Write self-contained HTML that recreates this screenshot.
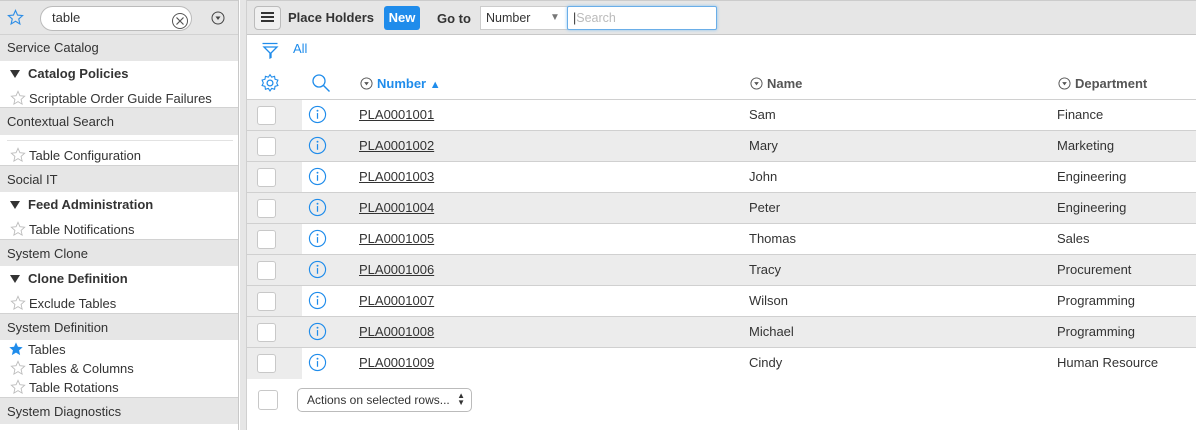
<!DOCTYPE html>
<html><head><meta charset="utf-8"><style>
*{margin:0;padding:0;box-sizing:border-box}
body{width:1196px;height:430px;overflow:hidden;background:#fff;font-family:"Liberation Sans",Arial,sans-serif;font-size:13px;color:#333;position:relative}
.a{position:absolute}
.nav{left:0;top:0;width:239px;height:430px;background:#fff;border-right:1px solid #c8c8c8}
.band{position:absolute;left:0;width:238px;background:#e6e6e6;color:#333;font-size:13px;padding-left:7px;border-top:1px solid #d2d2d2}
.it{position:absolute;left:10px;font-size:13px;color:#333;white-space:nowrap}
.it svg{vertical-align:-3px;margin-right:3px}
.grp{position:absolute;left:10px;font-weight:bold;font-size:13px;color:#333}
.grp:before{content:"";display:inline-block;border-left:5px solid transparent;border-right:5px solid transparent;border-top:8px solid #333;margin-right:8px;vertical-align:0px}
.row{position:absolute;left:247px;width:949px;height:31px;border-top:1px solid #d0d0d0}
.cb{position:absolute;left:10px;top:6px;width:19px;height:19px;border:1px solid #c8c8c8;border-radius:3px;background:#fff}
.info{position:absolute;left:61px;top:5px}
.num{position:absolute;left:112px;top:7px;text-decoration:underline;color:#333}
.nm{position:absolute;left:502px;top:7px}
.dp{position:absolute;left:810px;top:7px}
</style></head><body>
<div class="a nav">
 <div class="a" style="left:0;top:0;width:238px;height:35px;background:#e6e6e6;border-top:1px solid #ccc"></div>
 <svg class="a" style="left:7px;top:9px" width="17" height="17" viewBox="0 0 24 24"><path d="M12 2l2.9 6.6 7.1.7-5.4 4.8 1.6 7-6.2-3.7-6.2 3.7 1.6-7L2 9.3l7.1-.7z" fill="none" stroke="#2e8ee6" stroke-width="1.6"/></svg>
 <div class="a" style="left:40px;top:6px;width:152px;height:25px;border:1px solid #bbb;border-radius:13px;background:#fff;padding:3px 0 0 11px;font-size:13px">table</div>
 <svg class="a" style="left:171px;top:12px" width="18" height="18" viewBox="0 0 18 18"><circle cx="9" cy="9" r="7.5" fill="#fff" stroke="#555"/><path d="M5.5 5.5l7 7M12.5 5.5l-7 7" stroke="#555" stroke-width="1.2"/></svg>
 <svg class="a" style="left:211px;top:11px" width="14" height="14" viewBox="0 0 14 14"><circle cx="7" cy="7" r="6" fill="none" stroke="#444"/><path d="M4.5 5.5h5L7 9z" fill="#444"/></svg>
 <div class="band" style="top:34px;height:27px;padding-top:5px">Service Catalog</div>
 <div class="grp" style="top:66px">Catalog Policies</div>
 <div class="it" style="top:90px"><svg width="16" height="16" viewBox="0 0 24 24"><path d="M12 2l2.9 6.6 7.1.7-5.4 4.8 1.6 7-6.2-3.7-6.2 3.7 1.6-7L2 9.3l7.1-.7z" fill="none" stroke="#bbb" stroke-width="1.3"/></svg>Scriptable Order Guide Failures</div>
 <div class="band" style="top:107px;height:28px;padding-top:6px">Contextual Search</div>
 <div class="a" style="left:7px;top:140px;width:226px;height:1px;background:#e2e2e2"></div>
 <div class="it" style="top:147px"><svg width="16" height="16" viewBox="0 0 24 24"><path d="M12 2l2.9 6.6 7.1.7-5.4 4.8 1.6 7-6.2-3.7-6.2 3.7 1.6-7L2 9.3l7.1-.7z" fill="none" stroke="#bbb" stroke-width="1.3"/></svg>Table Configuration</div>
 <div class="band" style="top:165px;height:27px;padding-top:6px">Social IT</div>
 <div class="grp" style="top:197px">Feed Administration</div>
 <div class="it" style="top:221px"><svg width="16" height="16" viewBox="0 0 24 24"><path d="M12 2l2.9 6.6 7.1.7-5.4 4.8 1.6 7-6.2-3.7-6.2 3.7 1.6-7L2 9.3l7.1-.7z" fill="none" stroke="#bbb" stroke-width="1.3"/></svg>Table Notifications</div>
 <div class="band" style="top:239px;height:27px;padding-top:6px">System Clone</div>
 <div class="grp" style="top:271px">Clone Definition</div>
 <div class="it" style="top:295px"><svg width="16" height="16" viewBox="0 0 24 24"><path d="M12 2l2.9 6.6 7.1.7-5.4 4.8 1.6 7-6.2-3.7-6.2 3.7 1.6-7L2 9.3l7.1-.7z" fill="none" stroke="#bbb" stroke-width="1.3"/></svg>Exclude Tables</div>
 <div class="band" style="top:313px;height:27px;padding-top:6px">System Definition</div>
 <div class="it" style="top:341px;left:7px"><svg width="18" height="16" viewBox="0 0 24 24"><path d="M12 2l2.9 6.6 7.1.7-5.4 4.8 1.6 7-6.2-3.7-6.2 3.7 1.6-7L2 9.3l7.1-.7z" fill="#1f8ceb"/></svg>Tables</div>
 <div class="it" style="top:360px"><svg width="16" height="16" viewBox="0 0 24 24"><path d="M12 2l2.9 6.6 7.1.7-5.4 4.8 1.6 7-6.2-3.7-6.2 3.7 1.6-7L2 9.3l7.1-.7z" fill="none" stroke="#bbb" stroke-width="1.3"/></svg>Tables &amp; Columns</div>
 <div class="it" style="top:379px"><svg width="16" height="16" viewBox="0 0 24 24"><path d="M12 2l2.9 6.6 7.1.7-5.4 4.8 1.6 7-6.2-3.7-6.2 3.7 1.6-7L2 9.3l7.1-.7z" fill="none" stroke="#bbb" stroke-width="1.3"/></svg>Table Rotations</div>
 <div class="band" style="top:397px;height:27px;padding-top:6px">System Diagnostics</div>
</div>
<div class="a" style="left:240px;top:0;width:7px;height:430px;background:#e6e6e6;border-right:1px solid #d0d0d0"></div>
<div class="a" style="left:247px;top:0;width:949px;height:35px;background:#e6e6e6;border-top:1px solid #ccc;border-bottom:1px solid #c8c8c8"></div>
<div class="a" style="left:254px;top:6px;width:27px;height:24px;border:1px solid #bbb;border-radius:4px;background:#f0f0f0"></div>
<div class="a" style="left:261px;top:12px;width:13px;height:2px;background:#333;box-shadow:0 4px 0 #333,0 8px 0 #333"></div>
<div class="a" style="left:288px;top:10px;font-weight:bold;color:#333">Place Holders</div>
<div class="a" style="left:384px;top:6px;width:36px;height:24px;background:#1f8ceb;border-radius:3px;color:#fff;font-weight:bold;text-align:center;padding-top:4px">New</div>
<div class="a" style="left:437px;top:11px;font-weight:bold;color:#333">Go to</div>
<div class="a" style="left:480px;top:6px;width:88px;height:24px;background:#fff;border:1px solid #ccc;padding:4px 0 0 5px;font-size:12.5px">Number<span style="position:absolute;left:69px;top:5px;color:#777;font-size:10px">▼</span></div>
<div class="a" style="left:567px;top:6px;width:150px;height:24px;background:#fff;border:1px solid #6aaee8;box-shadow:0 0 3px #8cc4f2;border-radius:2px;padding:4px 0 0 5px;font-size:12.5px;color:#bbb"><span style="color:#333">|</span>Search</div>
<svg class="a" style="left:261px;top:42px" width="18" height="18" viewBox="0 0 18 18"><path d="M1.5 1.5h15M3 5l6 6v5l1-.5v-4.5l6-6z" fill="none" stroke="#1f8ceb" stroke-width="1.3"/></svg>
<div class="a" style="left:293px;top:41px;color:#1f8ceb">All</div>
<svg class="a" style="left:260px;top:73px" width="20" height="20" viewBox="0 0 24 24"><circle cx="12" cy="12" r="3.5" fill="none" stroke="#1f8ceb" stroke-width="1.5"/><path d="M12 2l2 3 3.5-1 .5 3.5 3.5 1-1.5 3.5 1.5 3-3.5 1-.5 3.5-3.5-1-2 3-2-3-3.5 1-.5-3.5-3.5-1 1.5-3-1.5-3.5 3.5-1 .5-3.5 3.5 1z" fill="none" stroke="#1f8ceb" stroke-width="1.3"/></svg>
<svg class="a" style="left:311px;top:73px" width="20" height="20" viewBox="0 0 20 20"><circle cx="8" cy="8" r="6" fill="none" stroke="#1f8ceb" stroke-width="1.3"/><path d="M12.5 12.5l6 6" stroke="#1f8ceb" stroke-width="1.4"/></svg>
<svg class="a" style="left:360px;top:77px" width="13" height="13" viewBox="0 0 14 14"><circle cx="7" cy="7" r="6" fill="none" stroke="#555"/><path d="M4.5 5.5h5L7 9z" fill="#555"/></svg>
<div class="a" style="left:377px;top:76px;font-weight:bold;color:#1f8ceb">Number <span style="font-size:11px">▲</span></div>
<svg class="a" style="left:750px;top:77px" width="13" height="13" viewBox="0 0 14 14"><circle cx="7" cy="7" r="6" fill="none" stroke="#555"/><path d="M4.5 5.5h5L7 9z" fill="#555"/></svg>
<div class="a" style="left:767px;top:76px;font-weight:bold;color:#555">Name</div>
<svg class="a" style="left:1058px;top:77px" width="13" height="13" viewBox="0 0 14 14"><circle cx="7" cy="7" r="6" fill="none" stroke="#555"/><path d="M4.5 5.5h5L7 9z" fill="#555"/></svg>
<div class="a" style="left:1075px;top:76px;font-weight:bold;color:#555">Department</div>

<div class="row" style="top:99px;background:#fff"><div class="a" style="left:0;top:0;width:55px;height:31px;background:#ececec"></div><div class="cb"></div><svg class="info" width="19" height="19" viewBox="0 0 20 20"><circle cx="10" cy="10" r="8.5" fill="none" stroke="#1f8ceb" stroke-width="1.2"/><circle cx="10" cy="6" r="1" fill="#1f8ceb"/><path d="M10 8.5v6" stroke="#1f8ceb" stroke-width="1.3"/></svg><span class="num">PLA0001001</span><span class="nm">Sam</span><span class="dp">Finance</span></div>
<div class="row" style="top:130px;background:#ececec"><div class="cb"></div><svg class="info" width="19" height="19" viewBox="0 0 20 20"><circle cx="10" cy="10" r="8.5" fill="none" stroke="#1f8ceb" stroke-width="1.2"/><circle cx="10" cy="6" r="1" fill="#1f8ceb"/><path d="M10 8.5v6" stroke="#1f8ceb" stroke-width="1.3"/></svg><span class="num">PLA0001002</span><span class="nm">Mary</span><span class="dp">Marketing</span></div>
<div class="row" style="top:161px;background:#fff"><div class="a" style="left:0;top:0;width:55px;height:31px;background:#ececec"></div><div class="cb"></div><svg class="info" width="19" height="19" viewBox="0 0 20 20"><circle cx="10" cy="10" r="8.5" fill="none" stroke="#1f8ceb" stroke-width="1.2"/><circle cx="10" cy="6" r="1" fill="#1f8ceb"/><path d="M10 8.5v6" stroke="#1f8ceb" stroke-width="1.3"/></svg><span class="num">PLA0001003</span><span class="nm">John</span><span class="dp">Engineering</span></div>
<div class="row" style="top:192px;background:#ececec"><div class="cb"></div><svg class="info" width="19" height="19" viewBox="0 0 20 20"><circle cx="10" cy="10" r="8.5" fill="none" stroke="#1f8ceb" stroke-width="1.2"/><circle cx="10" cy="6" r="1" fill="#1f8ceb"/><path d="M10 8.5v6" stroke="#1f8ceb" stroke-width="1.3"/></svg><span class="num">PLA0001004</span><span class="nm">Peter</span><span class="dp">Engineering</span></div>
<div class="row" style="top:223px;background:#fff"><div class="a" style="left:0;top:0;width:55px;height:31px;background:#ececec"></div><div class="cb"></div><svg class="info" width="19" height="19" viewBox="0 0 20 20"><circle cx="10" cy="10" r="8.5" fill="none" stroke="#1f8ceb" stroke-width="1.2"/><circle cx="10" cy="6" r="1" fill="#1f8ceb"/><path d="M10 8.5v6" stroke="#1f8ceb" stroke-width="1.3"/></svg><span class="num">PLA0001005</span><span class="nm">Thomas</span><span class="dp">Sales</span></div>
<div class="row" style="top:254px;background:#ececec"><div class="cb"></div><svg class="info" width="19" height="19" viewBox="0 0 20 20"><circle cx="10" cy="10" r="8.5" fill="none" stroke="#1f8ceb" stroke-width="1.2"/><circle cx="10" cy="6" r="1" fill="#1f8ceb"/><path d="M10 8.5v6" stroke="#1f8ceb" stroke-width="1.3"/></svg><span class="num">PLA0001006</span><span class="nm">Tracy</span><span class="dp">Procurement</span></div>
<div class="row" style="top:285px;background:#fff"><div class="a" style="left:0;top:0;width:55px;height:31px;background:#ececec"></div><div class="cb"></div><svg class="info" width="19" height="19" viewBox="0 0 20 20"><circle cx="10" cy="10" r="8.5" fill="none" stroke="#1f8ceb" stroke-width="1.2"/><circle cx="10" cy="6" r="1" fill="#1f8ceb"/><path d="M10 8.5v6" stroke="#1f8ceb" stroke-width="1.3"/></svg><span class="num">PLA0001007</span><span class="nm">Wilson</span><span class="dp">Programming</span></div>
<div class="row" style="top:316px;background:#ececec"><div class="cb"></div><svg class="info" width="19" height="19" viewBox="0 0 20 20"><circle cx="10" cy="10" r="8.5" fill="none" stroke="#1f8ceb" stroke-width="1.2"/><circle cx="10" cy="6" r="1" fill="#1f8ceb"/><path d="M10 8.5v6" stroke="#1f8ceb" stroke-width="1.3"/></svg><span class="num">PLA0001008</span><span class="nm">Michael</span><span class="dp">Programming</span></div>
<div class="row" style="top:347px;background:#fff"><div class="a" style="left:0;top:0;width:55px;height:31px;background:#ececec"></div><div class="cb"></div><svg class="info" width="19" height="19" viewBox="0 0 20 20"><circle cx="10" cy="10" r="8.5" fill="none" stroke="#1f8ceb" stroke-width="1.2"/><circle cx="10" cy="6" r="1" fill="#1f8ceb"/><path d="M10 8.5v6" stroke="#1f8ceb" stroke-width="1.3"/></svg><span class="num">PLA0001009</span><span class="nm">Cindy</span><span class="dp">Human Resource</span></div>

<div class="a" style="left:258px;top:390px;width:20px;height:20px;border:1px solid #c8c8c8;border-radius:3px;background:#fff"></div>
<div class="a" style="left:297px;top:388px;width:175px;height:24px;border:1px solid #bbb;border-radius:5px;background:#fff;padding:4px 0 0 9px;font-size:12px">Actions on selected rows...<span style="position:absolute;right:6px;top:3px;font-size:8px;line-height:7px">▲<br>▼</span></div>
</body></html>
